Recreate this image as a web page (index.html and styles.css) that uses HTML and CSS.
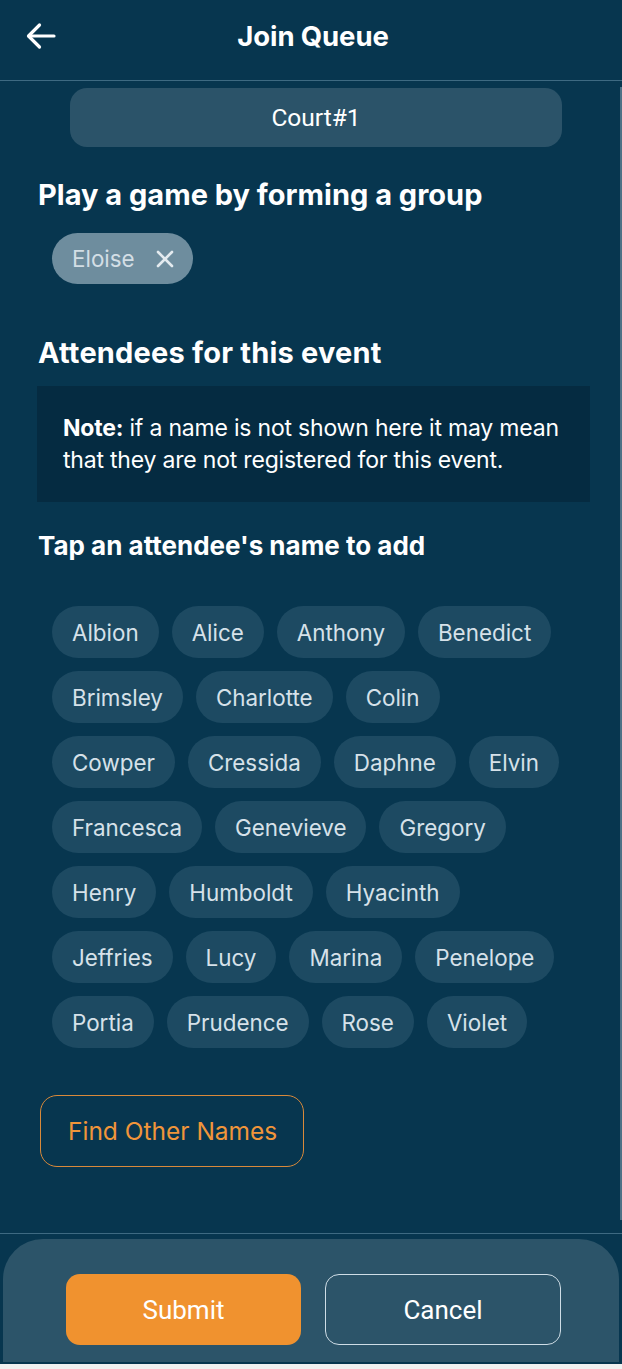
FILE: index.html
```html
<!DOCTYPE html>
<html lang="en">
<head>
<meta charset="utf-8">
<title>Join Queue</title>
<link rel="stylesheet" href="styles.css">
</head>
<body>
<div class="app">
  <header class="topbar">
    <button class="back" aria-label="Back">
      <svg width="30" height="28" viewBox="0 0 30 28" fill="none" stroke="#ffffff" stroke-width="3.2" stroke-linecap="round" stroke-linejoin="round">
        <path d="M28 14H3"/>
        <path d="M13.5 3L2.5 14L13.5 25"/>
      </svg>
    </button>
    <h1 class="title">Join Queue</h1>
  </header>

  <main class="content">
    <div class="court">Court#1</div>

    <h2 class="section-title">Play a game by forming a group</h2>
    <div class="group">
      <span class="chip chip-selected">Eloise
        <svg class="chip-x" width="18" height="18" viewBox="0 0 18 18" stroke="#e3eaef" stroke-width="2.6" stroke-linecap="round"><path d="M2 2L16 16M16 2L2 16"/></svg>
      </span>
    </div>

    <h2 class="section-title attendees-title">Attendees for this event</h2>
    <div class="note"><strong>Note:</strong> if a name is not shown here it may mean that they are not registered for this event.</div>

    <h3 class="sub-title">Tap an attendee's name to add</h3>
    <div class="chips">
      <span class="chip">Albion</span>
      <span class="chip">Alice</span>
      <span class="chip">Anthony</span>
      <span class="chip">Benedict</span>
      <span class="chip">Brimsley</span>
      <span class="chip">Charlotte</span>
      <span class="chip">Colin</span>
      <span class="chip">Cowper</span>
      <span class="chip">Cressida</span>
      <span class="chip">Daphne</span>
      <span class="chip">Elvin</span>
      <span class="chip">Francesca</span>
      <span class="chip">Genevieve</span>
      <span class="chip">Gregory</span>
      <span class="chip">Henry</span>
      <span class="chip">Humboldt</span>
      <span class="chip">Hyacinth</span>
      <span class="chip">Jeffries</span>
      <span class="chip">Lucy</span>
      <span class="chip">Marina</span>
      <span class="chip">Penelope</span>
      <span class="chip">Portia</span>
      <span class="chip">Prudence</span>
      <span class="chip">Rose</span>
      <span class="chip">Violet</span>
    </div>

    <button class="find-btn">Find Other Names</button>
  </main>

  <footer class="footer">
    <div class="panel">
      <button class="btn btn-submit">Submit</button>
      <button class="btn btn-cancel">Cancel</button>
    </div>
  </footer>
</div>
</body>
</html>
```

FILE: styles.css
```css
* { box-sizing: border-box; }

html, body {
  margin: 0;
  padding: 0;
}

body {
  background: #f1f1f1;
  font-family: Inter, "Noto Sans", sans-serif;
  color: #ffffff;
}

.app {
  width: 622px;
  height: 1364px;
  background: #07364f;
  display: flex;
  flex-direction: column;
}

.topbar {
  height: 81px;
  flex: 0 0 81px;
  border-bottom: 1px solid #3e6a82;
  display: flex;
  align-items: center;
  padding-bottom: 8px;
}

.back {
  background: none;
  border: none;
  padding: 0;
  margin-left: 26px;
  width: 30px;
  height: 28px;
  display: flex;
}

.title {
  margin: 0 54px 0 2px;
  font-family: Inter, "Noto Sans", sans-serif;
  font-weight: 700;
  font-size: 27.5px;
  letter-spacing: -0.1px;
  flex: 1;
  text-align: center;
}

.content {
  flex: 1;
  overflow: hidden;
  padding: 7px 32px 0 37px;
  position: relative;
}

.content::after {
  content: "";
  position: absolute;
  right: 0;
  top: 6px;
  bottom: 13px;
  width: 2px;
  background: #4d7186;
}

.court {
  margin: 0 28px 0 33px;
  height: 59px;
  border-radius: 17px;
  background: #2b5369;
  display: flex;
  align-items: center;
  justify-content: center;
  font-family: Roboto, "Liberation Sans", sans-serif;
  font-size: 24.5px;
  color: #ffffff;
}

.section-title {
  margin: 31px 0 0 1px;
  font-family: Inter, "Noto Sans", sans-serif;
  font-weight: 700;
  font-size: 29px;
  line-height: 34px;
  letter-spacing: 0;
}

.group {
  margin: 21px 0 0 15px;
  display: flex;
}

.chip {
  display: inline-flex;
  align-items: center;
  height: 52px;
  padding: 0 20px 0 20px;
  border-radius: 26px;
  background: #1d4a62;
  color: #d6e1e9;
  font-family: Inter, "Noto Sans", sans-serif;
  font-size: 22.4px;
  white-space: nowrap;
}

.chip-selected {
  background: #6e8d9e;
  color: #d3dee5;
  height: 51px;
  gap: 21px;
  padding-right: 19px;
}

.chip-x { display: block; }

.attendees-title {
  margin-top: 52px;
  letter-spacing: 0.2px;
}

.note {
  margin: 16px 0 0 0;
  width: 553px;
  background: #052b41;
  padding: 26px 16px 26px 26px;
  font-family: Inter, "Noto Sans", sans-serif;
  font-size: 23px;
  line-height: 32px;
  letter-spacing: -0.2px;
  color: #ffffff;
}

.note strong {
  font-weight: 700;
}

.sub-title {
  margin: 28px 0 0 1px;
  font-family: Inter, "Noto Sans", sans-serif;
  font-weight: 700;
  font-size: 26px;
  line-height: 32px;
  letter-spacing: 0;
}

.chips {
  margin: 44px 20px 0 15px;
  display: flex;
  flex-wrap: wrap;
  gap: 13px 13px;
}

.find-btn {
  margin: 47px 0 0 3px;
  height: 72px;
  padding: 0 26px 0 27px;
  background: transparent;
  border: 1px solid #d8893a;
  border-radius: 17px;
  color: #f0953a;
  font-family: Inter, "Noto Sans", sans-serif;
  font-size: 24.5px;
}

.footer {
  flex: 0 0 131px;
  border-top: 1px solid #3e6a82;
  padding: 5px 3px 2px 3px;
}

.panel {
  height: 123px;
  background: #2c5469;
  border-radius: 40px 40px 0 0;
  display: flex;
  gap: 24px;
  padding: 35px 58px 0 63px;
}

.btn {
  flex: 0 0 236px;
  height: 71px;
  border-radius: 14px;
  font-family: Roboto, "Liberation Sans", sans-serif;
  font-size: 26px;
  color: #ffffff;
}

.btn-submit {
  background: #f0922f;
  border: none;
  flex-basis: 235px;
}

.btn-cancel {
  background: transparent;
  border: 1px solid #cfdde6;
}
```
